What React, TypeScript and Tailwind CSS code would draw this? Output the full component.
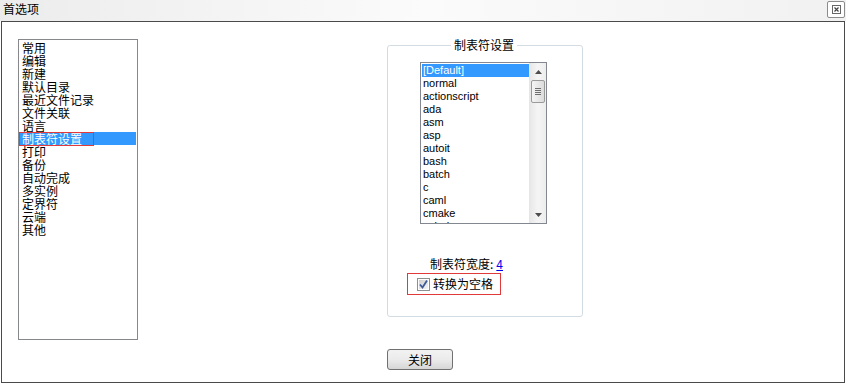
import React from "react";

const cjk = { fontFamily: '"Noto Sans CJK SC", "Noto Sans", sans-serif' };
const latin = { fontFamily: '"Liberation Sans", "Noto Sans CJK SC", sans-serif' };

const leftItems = [
  "常用",
  "编辑",
  "新建",
  "默认目录",
  "最近文件记录",
  "文件关联",
  "语言",
  "制表符设置",
  "打印",
  "备份",
  "自动完成",
  "多实例",
  "定界符",
  "云端",
  "其他",
];

const langs = [
  "[Default]",
  "normal",
  "actionscript",
  "ada",
  "asm",
  "asp",
  "autoit",
  "bash",
  "batch",
  "c",
  "caml",
  "cmake",
  "cobol",
];

function CloseIcon() {
  return (
    <svg width="9" height="9" viewBox="0 0 9 9">
      <rect x="0.5" y="0.5" width="8" height="8" fill="none" stroke="#666" strokeWidth="1" />
      <path d="M2.5 2.5 L6.5 6.5 M6.5 2.5 L2.5 6.5" stroke="#444" strokeWidth="1.2" />
    </svg>
  );
}

function Scrollbar() {
  return (
    <div className="w-[17px] h-full flex flex-col bg-gradient-to-r from-[#e8e8e8] via-[#f5f5f5] to-[#ededed] border-l border-[#e6e6e6]">
      <div className="h-[17px] flex items-center justify-center">
        <svg width="7" height="4" viewBox="0 0 7 4">
          <path d="M0 4 L3.5 0 L7 4 Z" fill="#4d4d4d" />
        </svg>
      </div>
      <div className="mx-[1px] h-[23px] rounded-[2px] border border-[#9a9a9a] bg-gradient-to-r from-[#f4f4f4] to-[#dcdcdc] flex flex-col items-center justify-center gap-[1px]">
        <div className="w-[6px] h-[1px] bg-[#6e6e6e]" />
        <div className="w-[6px] h-[1px] bg-[#6e6e6e]" />
        <div className="w-[6px] h-[1px] bg-[#6e6e6e]" />
        <div className="w-[6px] h-[1px] bg-[#6e6e6e]" />
      </div>
      <div className="flex-1" />
      <div className="h-[17px] flex items-center justify-center">
        <svg width="7" height="4" viewBox="0 0 7 4">
          <path d="M0 0 L3.5 4 L7 0 Z" fill="#4d4d4d" />
        </svg>
      </div>
    </div>
  );
}

function Checkbox() {
  return (
    <div className="w-[13px] h-[13px] border border-[#8e8f8f] bg-white p-[1px]">
      <div className="w-full h-full bg-gradient-to-br from-[#cfcfcf] to-[#f4f4f4] relative">
        <svg className="absolute left-[-1px] top-[-1px]" width="11" height="11" viewBox="0 0 11 11">
          <path d="M2 5.5 L4.5 8.5 L9 1.5" fill="none" stroke="#3b5a9a" strokeWidth="1.8" />
        </svg>
      </div>
    </div>
  );
}

export default function App() {
  return (
    <div className="w-[846px] h-[384px] bg-white overflow-hidden text-black" style={cjk}>
      {/* title bar */}
      <div className="h-[21px] flex items-start justify-between bg-gradient-to-r from-[#ececec] via-[#fbfbfb] to-[#f1f1f1]">
        <span className="pl-[3px] pt-[1px] text-[12px] leading-[16px]">首选项</span>
        <div className="mt-[1px] mr-[1px] w-[18px] h-[17px] border border-[#8c8c8c] rounded-[2px] bg-white flex items-center justify-center">
          <CloseIcon />
        </div>
      </div>

      {/* main panel */}
      <div className="ml-[1px] w-[844px] h-[362px] border border-[#4a4a4a] flex items-start">
        {/* left list */}
        <div className="ml-[16px] mt-[17px] w-[120px] h-[301px] border border-[#86888c] pt-[1px]">
          {leftItems.map((it, i) =>
            i === 7 ? (
              <div
                key={it}
                className="relative h-[13px] leading-[13px] text-[12px] text-white bg-[#3399ff] mr-[1px] pl-[3px] whitespace-nowrap"
              >
                <div className="absolute left-0 top-0 w-[75px] h-[14px] border border-[#e23a3a]" />
                {it}
              </div>
            ) : (
              <div key={it} className="h-[13px] leading-[13px] text-[12px] pl-[3px] whitespace-nowrap">
                {it}
              </div>
            )
          )}
        </div>

        {/* center column */}
        <div className="ml-[249px] mt-[23px] flex flex-col items-start">
          <div className="relative w-[196px] h-[272px] border border-[#d3dce3] rounded-[3px]">
            <div className="absolute left-0 right-0 top-[-8px] flex justify-center">
              <span className="bg-white px-[3px] text-[12px] leading-[14px] ml-[-2px]">制表符设置</span>
            </div>

            <div className="ml-[32px] mt-[16px] w-[127px] h-[162px] border border-[#828790] flex">
              <div className="flex-1 overflow-hidden pt-[1px] pl-[1px]">
                {langs.map((l, i) => (
                  <div
                    key={l}
                    className={
                      "h-[13px] leading-[13px] text-[11px] pl-[1px] whitespace-nowrap " +
                      (i === 0 ? "bg-[#3399ff] text-white" : "text-black")
                    }
                    style={latin}
                  >
                    {l}
                  </div>
                ))}
              </div>
              <Scrollbar />
            </div>

            <div className="ml-[42px] mt-[33px] text-[12px] leading-[14px] flex items-center">
              <span>制表符宽度:</span>
              <span className="ml-[3px] text-[#0000ee] underline">4</span>
            </div>

            <div className="ml-[19px] mt-[2px] w-[94px] h-[22px] border border-[#e23a3a] flex items-center pl-[9px]">
              <Checkbox />
              <span className="ml-[3px] text-[12px] leading-[14px]">转换为空格</span>
            </div>
          </div>

          <button className="mt-[32px] w-[66px] h-[21px] rounded-[3px] border border-[#707070] bg-gradient-to-b from-[#f2f2f2] via-[#ebebeb] to-[#d6d6d6] text-[12px] leading-[14px] flex items-center justify-center">
            关闭
          </button>
        </div>
      </div>
    </div>
  );
}
